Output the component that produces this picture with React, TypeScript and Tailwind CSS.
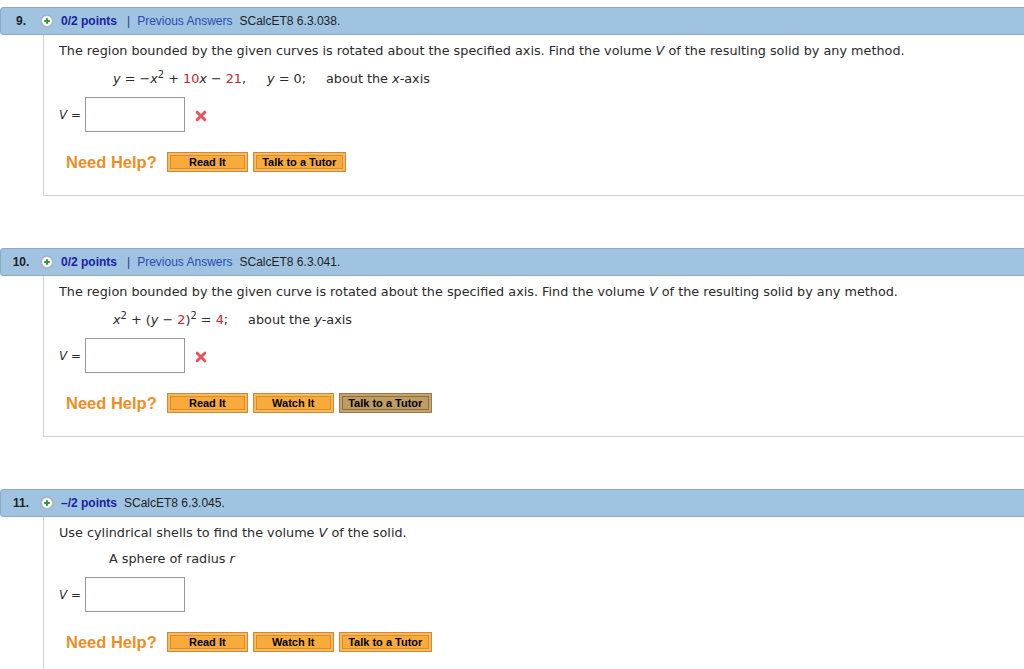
import type { ReactNode } from "react";

const body = { fontFamily: '"DejaVu Sans", Verdana, sans-serif' };
const arial = { fontFamily: '"Liberation Sans", Arial, sans-serif' };

function PlusIcon() {
  return (
    <span className="inline-flex h-[12px] w-[12px] items-center justify-center rounded-full border border-[#b8b8b8] bg-white shadow-[0_0_1px_rgba(0,0,0,0.3)]">
      <svg width="8" height="8" viewBox="0 0 8 8">
        <path d="M4 1.2v5.6M1.2 4h5.6" stroke="#2f9a35" strokeWidth="2" />
      </svg>
    </span>
  );
}

function WrongMark() {
  return (
    <svg width="12" height="12" viewBox="0 0 12 12" className="ml-[10px] mt-[2px]">
      <path d="M2.2 2.2l7.6 7.6M9.8 2.2l-7.6 7.6" stroke="#e8525a" strokeWidth="3" strokeLinecap="round" />
    </svg>
  );
}

function HelpButton({ label, dim, wide }: { label: string; dim?: boolean; wide?: boolean }) {
  return (
    <span
      className={`inline-flex h-[20px] items-center justify-center border p-[2px] ${wide ? "w-[93px]" : "w-[81px]"} ${
        dim ? "border-[#9a7a4a] bg-[#c4a36c]" : "border-[#c98a3a] bg-[#f9b85a]"
      }`}
    >
      <span
        className={`flex h-full w-full items-center justify-center border text-[11px] font-bold text-black ${
          dim ? "border-[#8e6f3f] bg-[#bf9c62]" : "border-[#d58f2e] bg-[#f8ab3a]"
        }`}
        style={arial}
      >
        {label}
      </span>
    </span>
  );
}

function Header({ num, points, previous, code }: { num: string; points: string; previous?: boolean; code: string }) {
  return (
    <div
      className="flex h-[28px] items-center rounded-l-[4px] border-y border-l border-[#8ea8c2] bg-[#a0c3e2] text-[12px]"
      style={arial}
    >
      <span className="w-[40px] text-center font-bold text-[#222]">{num}</span>
      <PlusIcon />
      <span className="ml-[8px] font-bold text-[#1a22a0]">{points}</span>
      {previous && (
        <>
          <span className="ml-[10px] text-[#2a3a8a]">|</span>
          <span className="ml-[7px] text-[#2a4ab0]">Previous Answers</span>
        </>
      )}
      <span className="ml-[7px] text-[#222]">{code}</span>
    </div>
  );
}

function Question({
  header,
  text,
  eq,
  eqClass,
  wrong,
  buttons,
}: {
  header: ReactNode;
  text: ReactNode;
  eq: ReactNode;
  eqClass: string;
  wrong?: boolean;
  buttons: { label: string; dim?: boolean; wide?: boolean }[];
}) {
  return (
    <div>
      {header}
      <div className="ml-[43px] border-b border-l border-[#cfcfcf] pl-[15px] pt-[7px] pb-[23px] text-[12.8px] text-[#2a2a2a]" style={body}>
        <p className="leading-[18px]">{text}</p>
        <p className={`leading-[18px] ${eqClass}`}>{eq}</p>
        <div className="mt-[9px] flex items-center">
          <span className="w-[26px] text-[12px]">
            <i>V</i> =
          </span>
          <span className="h-[35px] w-[100px] border border-[#999] bg-white" />
          {wrong && <WrongMark />}
        </div>
        <div className="mt-[20px] flex items-center">
          <span className="ml-[7px] mr-[10px] text-[16.5px] font-bold leading-[20px] text-[#ee8d22]" style={arial}>
            Need Help?
          </span>
          <div className="flex gap-[5px]">
            {buttons.map((b) => (
              <HelpButton key={b.label} label={b.label} dim={b.dim} wide={b.wide} />
            ))}
          </div>
        </div>
      </div>
    </div>
  );
}

const red = "text-[#d0202a]";
const Gap = ({ w }: { w: string }) => <span className={`inline-block ${w}`} />;

export default function App() {
  return (
    <div className="min-h-[669px] w-[1030px] bg-white pt-[7px]">
      <Question
        header={<Header num="9." points="0/2 points" previous code="SCalcET8 6.3.038." />}
        text={
          <>
            The region bounded by the given curves is rotated about the specified axis. Find the volume <i>V</i> of the resulting solid by any method.
          </>
        }
        eqClass="mt-[10px] pl-[54px]"
        eq={
          <>
            <i>y</i> = −<i>x</i>
            <sup className="text-[10px]">2</sup> + <span className={red}>10</span>
            <i>x</i> − <span className={red}>21</span>,<Gap w="w-[21px]" />
            <i>y</i> = 0;<Gap w="w-[20px]" />about the <i>x</i>-axis
          </>
        }
        wrong
        buttons={[{ label: "Read It" }, { label: "Talk to a Tutor", wide: true }]}
      />
      <div className="h-[52px]" />
      <Question
        header={<Header num="10." points="0/2 points" previous code="SCalcET8 6.3.041." />}
        text={
          <>
            The region bounded by the given curve is rotated about the specified axis. Find the volume <i>V</i> of the resulting solid by any method.
          </>
        }
        eqClass="mt-[10px] pl-[54px]"
        eq={
          <>
            <i>x</i>
            <sup className="text-[10px]">2</sup> + (<i>y</i> − <span className={red}>2</span>)
            <sup className="text-[10px]">2</sup> = <span className={red}>4</span>;<Gap w="w-[20px]" />
            about the <i>y</i>-axis
          </>
        }
        wrong
        buttons={[{ label: "Read It" }, { label: "Watch It" }, { label: "Talk to a Tutor", dim: true, wide: true }]}
      />
      <div className="h-[52px]" />
      <Question
        header={<Header num="11." points="–/2 points" code="SCalcET8 6.3.045." />}
        text={
          <>
            Use cylindrical shells to find the volume <i>V</i> of the solid.
          </>
        }
        eqClass="mt-[8px] pl-[50px]"
        eq={
          <>
            A sphere of radius <i>r</i>
          </>
        }
        buttons={[{ label: "Read It" }, { label: "Watch It" }, { label: "Talk to a Tutor", wide: true }]}
      />
    </div>
  );
}
